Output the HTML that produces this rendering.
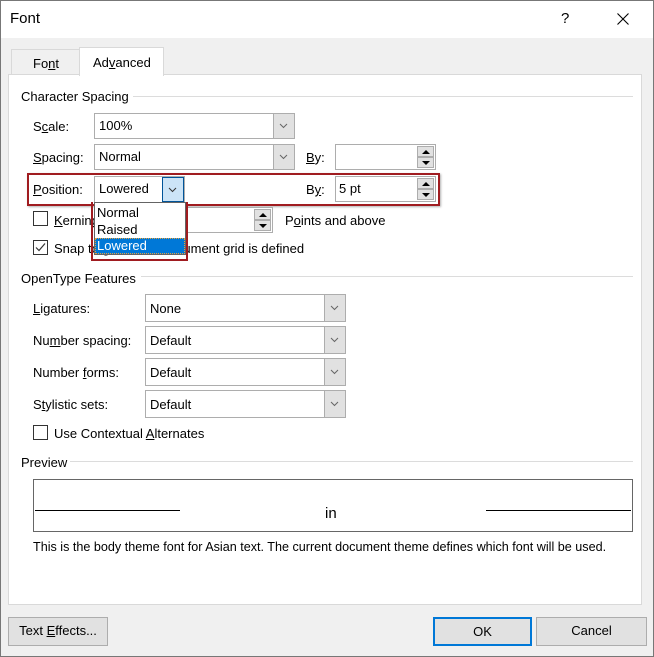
<!DOCTYPE html>
<html><head><style>
*{box-sizing:border-box;margin:0;padding:0}
body{width:654px;height:657px;background:#f0f0f0;font-family:"Liberation Sans",sans-serif;font-size:13px;color:#000;position:relative;overflow:hidden}
.a{position:absolute;white-space:nowrap}
.t{position:absolute;white-space:nowrap;line-height:16px}
.combo{position:absolute;background:#fff;border:1px solid #adadad}
.combo .btn{position:absolute;right:0;top:0;bottom:0;width:21px;background:#e1e1e1;border-left:1px solid #adadad}
.combo .txt{position:absolute;left:4px;top:4px;line-height:16px}
.chev{position:absolute;left:6px;top:8px;width:7px;height:7px}
.spin{position:absolute;background:#fff;border:1px solid #adadad}
.spin .u,.spin .d{position:absolute;right:1px;width:17px;height:11px;background:#e1e1e1;border:1px solid #adadad}
.spin .u{top:1px}.spin .d{bottom:1px}
.tri{position:absolute;left:4px;width:0;height:0;border-left:4px solid transparent;border-right:4px solid transparent}
.u .tri{top:3px;border-bottom:4px solid #000}
.d .tri{top:3px;border-top:4px solid #000}
.cb{position:absolute;width:15px;height:15px;border:1px solid #333;background:#fff}
.line{position:absolute;height:1px;background:#dcdcdc}
.btnx{position:absolute;background:#e1e1e1;border:1px solid #adadad;text-align:center;line-height:26px}
u{text-decoration:underline}
</style></head><body>
<div class="a" style="left:0;top:0;width:654px;height:38px;background:#fff"></div>
<div class="a" style="left:0;top:0;width:1px;height:657px;background:#777"></div>
<div class="a" style="right:0;top:0;width:1px;height:657px;background:#777"></div>
<div class="a" style="left:0;top:0;width:654px;height:1px;background:#777"></div>
<div class="a" style="left:0;bottom:0;width:654px;height:1px;background:#777"></div>
<div class="t" style="left:10px;top:10px;font-size:15px;line-height:18px">Font</div>
<div class="t" style="left:561px;top:10px;font-size:15px;line-height:18px">?</div>
<svg class="a" style="left:617px;top:13px" width="12" height="12"><path d="M0.5 0.5L11.5 11.5M11.5 0.5L0.5 11.5" stroke="#000" stroke-width="1.1"/></svg>

<div class="a" style="left:11px;top:49px;width:69px;height:26px;background:#f0f0f0;border:1px solid #d9d9d9;border-bottom:none"></div>
<div class="t" style="left:33px;top:56px">Fo<u>n</u>t</div>
<div class="a" style="left:8px;top:74px;width:634px;height:531px;background:#fff;border:1px solid #d9d9d9"></div>
<div class="a" style="left:79px;top:47px;width:85px;height:29px;background:#fff;border:1px solid #d9d9d9;border-bottom:none"></div>
<div class="t" style="left:93px;top:55px">Ad<u>v</u>anced</div>

<div class="t" style="left:21px;top:89px">Character Spacing</div>
<div class="line" style="left:133px;top:96px;width:500px"></div>

<div class="t" style="left:33px;top:119px">S<u>c</u>ale:</div>
<div class="combo" style="left:94px;top:113px;width:201px;height:26px"><div class="txt">100%</div><div class="btn"><svg class="chev" viewBox="0 0 7 7" style="width:9px;left:5px"><path d="M0 2L3.5 5.5L7 2" fill="none" stroke="#666"/></svg></div></div>

<div class="t" style="left:33px;top:150px"><u>S</u>pacing:</div>
<div class="combo" style="left:94px;top:144px;width:201px;height:26px"><div class="txt">Normal</div><div class="btn"><svg class="chev" viewBox="0 0 7 7" style="width:9px;left:5px"><path d="M0 2L3.5 5.5L7 2" fill="none" stroke="#666"/></svg></div></div>
<div class="t" style="left:306px;top:150px"><u>B</u>y:</div>
<div class="spin" style="left:335px;top:144px;width:101px;height:26px"><div class="u"><div class="tri"></div></div><div class="d"><div class="tri"></div></div></div>

<div class="t" style="left:33px;top:182px"><u>P</u>osition:</div>
<div class="combo" style="left:94px;top:176px;width:91px;height:27px"><div class="txt">Lowered</div><div class="btn" style="background:#cce4f7;border:1px solid #005499;width:22px"><svg class="chev" viewBox="0 0 7 7" style="width:9px;left:5px"><path d="M0 2L3.5 5.5L7 2" fill="none" stroke="#333"/></svg></div></div>
<div class="t" style="left:306px;top:182px">B<u>y</u>:</div>
<div class="spin" style="left:335px;top:176px;width:101px;height:26px"><div class="txt a" style="left:3px;top:4px;line-height:16px">5 pt</div><div class="u"><div class="tri"></div></div><div class="d"><div class="tri"></div></div></div>
<div class="a" style="left:27px;top:173px;width:413px;height:33px;border:2px solid #a01c20;box-shadow:1px 1px 2px rgba(0,0,0,.3)"></div>

<div class="cb" style="left:33px;top:211px"></div>
<div class="t" style="left:54px;top:213px"><u>K</u>erning for fonts:</div>
<div class="spin" style="left:180px;top:207px;width:93px;height:26px"><div class="u"><div class="tri"></div></div><div class="d"><div class="tri"></div></div></div>
<div class="t" style="left:285px;top:213px">P<u>o</u>ints and above</div>
<div class="cb" style="left:33px;top:240px"><svg width="13" height="13" style="position:absolute;left:0;top:0"><path d="M2 6.5L5 9.5L11 2.5" fill="none" stroke="#333" stroke-width="1.2"/></svg></div>
<div class="t" style="left:54px;top:241px">Snap to <u>g</u>rid when document grid is defined</div>

<div class="a" style="left:94px;top:202px;width:92px;height:53px;background:#fff;border:1px solid #646464"></div>
<div class="t" style="left:97px;top:205px">Normal</div>
<div class="t" style="left:97px;top:222px">Raised</div>
<div class="a" style="left:95px;top:238px;width:90px;height:16px;background:#0078d7;border:1px dotted #e8a33d"></div>
<div class="t" style="left:97px;top:238px;color:#fff">Lowered</div>
<div class="a" style="left:91px;top:202px;width:97px;height:59px;border:2px solid #a01c20;border-top:none"></div>

<div class="t" style="left:21px;top:271px">OpenType Features</div>
<div class="line" style="left:141px;top:276px;width:492px"></div>

<div class="t" style="left:33px;top:301px"><u>L</u>igatures:</div>
<div class="combo" style="left:145px;top:294px;width:201px;height:28px"><div class="txt" style="top:6px">None</div><div class="btn"><svg class="chev" viewBox="0 0 7 7" style="width:9px;left:5px;top:9px"><path d="M0 2L3.5 5.5L7 2" fill="none" stroke="#666"/></svg></div></div>
<div class="t" style="left:33px;top:333px">Nu<u>m</u>ber spacing:</div>
<div class="combo" style="left:145px;top:326px;width:201px;height:28px"><div class="txt" style="top:6px">Default</div><div class="btn"><svg class="chev" viewBox="0 0 7 7" style="width:9px;left:5px;top:9px"><path d="M0 2L3.5 5.5L7 2" fill="none" stroke="#666"/></svg></div></div>
<div class="t" style="left:33px;top:365px">Number <u>f</u>orms:</div>
<div class="combo" style="left:145px;top:358px;width:201px;height:28px"><div class="txt" style="top:6px">Default</div><div class="btn"><svg class="chev" viewBox="0 0 7 7" style="width:9px;left:5px;top:9px"><path d="M0 2L3.5 5.5L7 2" fill="none" stroke="#666"/></svg></div></div>
<div class="t" style="left:33px;top:397px">S<u>t</u>ylistic sets:</div>
<div class="combo" style="left:145px;top:390px;width:201px;height:28px"><div class="txt" style="top:6px">Default</div><div class="btn"><svg class="chev" viewBox="0 0 7 7" style="width:9px;left:5px;top:9px"><path d="M0 2L3.5 5.5L7 2" fill="none" stroke="#666"/></svg></div></div>

<div class="cb" style="left:33px;top:425px"></div>
<div class="t" style="left:54px;top:426px">Use Contextual <u>A</u>lternates</div>

<div class="t" style="left:21px;top:455px">Preview</div>
<div class="line" style="left:70px;top:461px;width:563px"></div>
<div class="a" style="left:33px;top:479px;width:600px;height:53px;border:1px solid #666;background:#fff"></div>
<div class="a" style="left:35px;top:510px;width:145px;height:1px;background:#000"></div>
<div class="a" style="left:486px;top:510px;width:145px;height:1px;background:#000"></div>
<div class="t" style="left:325px;top:505px;font-size:15px;line-height:18px">in</div>
<div class="t" style="left:33px;top:539px;font-size:12.6px">This is the body theme font for Asian text. The current document theme defines which font will be used.</div>

<div class="btnx" style="left:8px;top:617px;width:100px;height:29px">Text <u>E</u>ffects...</div>
<div class="btnx" style="left:433px;top:617px;width:99px;height:29px;border:2px solid #0078d7;line-height:25px">OK</div>
<div class="btnx" style="left:536px;top:617px;width:111px;height:29px">Cancel</div>
</body></html>
